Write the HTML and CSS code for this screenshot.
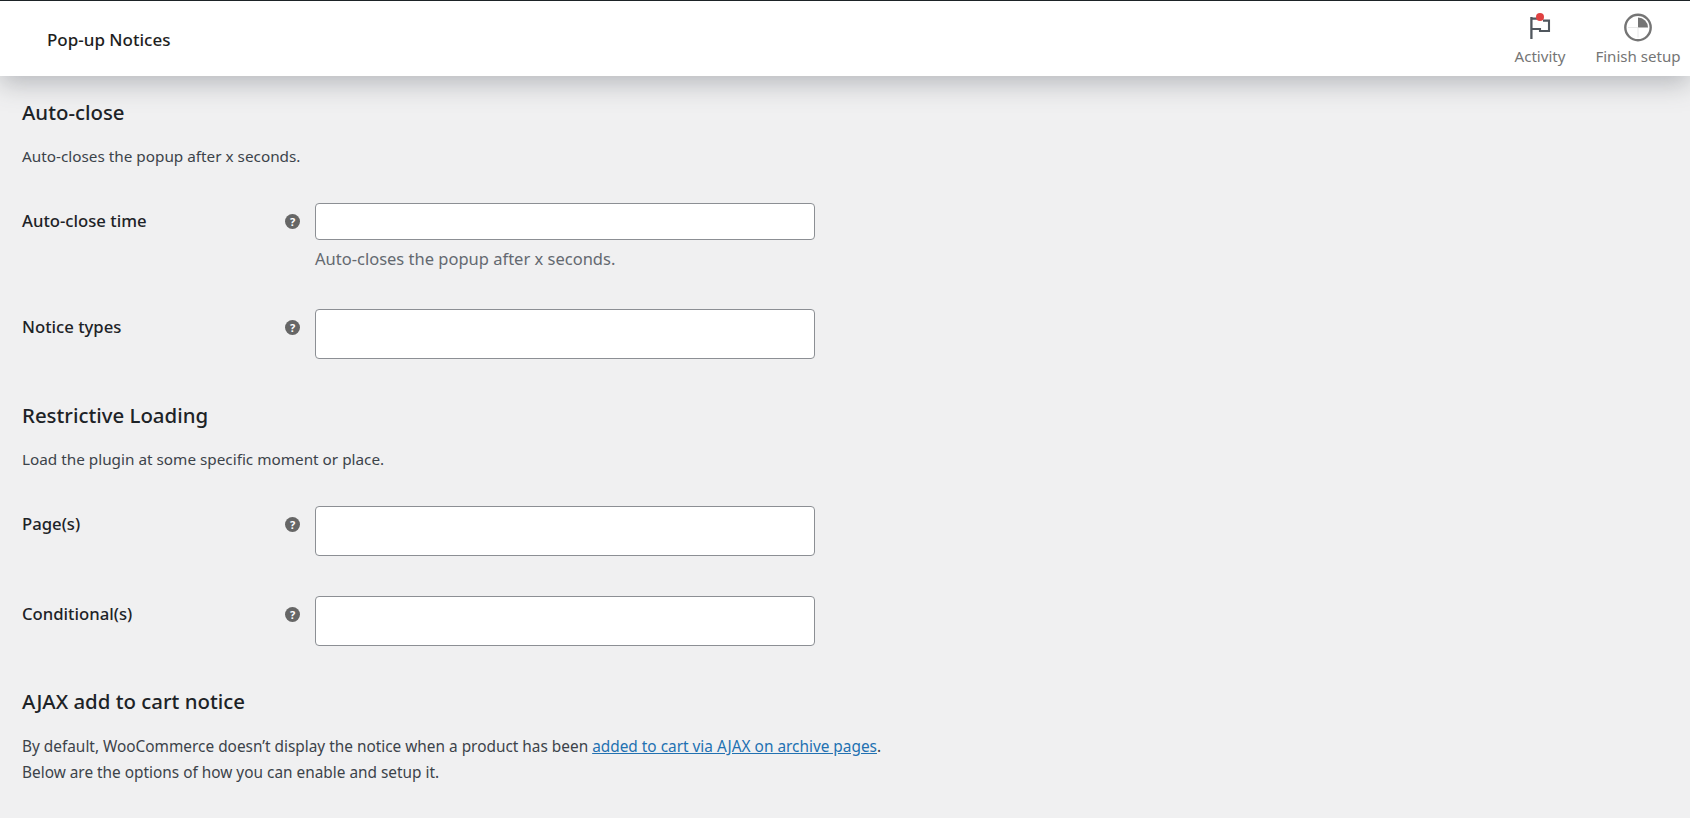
FILE: index.html
```html
<!DOCTYPE html>
<html lang="en">
<head>
<meta charset="utf-8">
<title>Pop-up Notices</title>
<link rel="stylesheet" href="styles.css">
</head>
<body>
<header class="topbar">
  <h1 class="page-title">Pop-up Notices</h1>
  <nav class="activity">
    <a class="activity-item">
      <span class="activity-icon">
        <svg width="24" height="24" viewBox="0 0 24 24" fill="none"><path d="M3.4 1v22" stroke="#50575e" stroke-width="2.3"/><path d="M3.4 2.6H10M3.4 13H12V15H21V4.6H15" stroke="#50575e" stroke-width="2.1"/></svg>
        <span class="badge"></span>
      </span>
      <span class="activity-label">Activity</span>
    </a>
    <a class="activity-item">
      <span class="activity-icon">
        <svg width="30" height="30" viewBox="0 0 30 30" fill="none"><circle cx="15" cy="14.5" r="12.7" stroke="#757575" stroke-width="2.4"/><path d="M15 14.5V4.5a10 10 0 0 1 10 10z" fill="#757575"/><path d="M15 14.5v10M5 14.5h10" stroke="#e8e8e8" stroke-width="1"/></svg>
      </span>
      <span class="activity-label">Finish setup</span>
    </a>
  </nav>
</header>
<main class="content">
  <h2 class="section-title">Auto-close</h2>
  <p class="section-desc">Auto-closes the popup after x seconds.</p>
  <div class="field field-time">
    <label class="field-label">Auto-close time</label>
    <span class="help">?</span>
    <div class="field-control">
      <input class="input input-short" type="text">
      <p class="hint">Auto-closes the popup after x seconds.</p>
    </div>
  </div>
  <div class="field field-types">
    <label class="field-label">Notice types</label>
    <span class="help">?</span>
    <div class="field-control"><div class="input input-tall"></div></div>
  </div>
  <h2 class="section-title title-loading">Restrictive Loading</h2>
  <p class="section-desc">Load the plugin at some specific moment or place.</p>
  <div class="field field-pages">
    <label class="field-label">Page(s)</label>
    <span class="help">?</span>
    <div class="field-control"><div class="input input-tall"></div></div>
  </div>
  <div class="field field-cond">
    <label class="field-label">Conditional(s)</label>
    <span class="help">?</span>
    <div class="field-control"><div class="input input-tall"></div></div>
  </div>
  <h2 class="section-title title-ajax">AJAX add to cart notice</h2>
  <p class="section-desc desc-ajax">By default, WooCommerce doesn’t display the notice when a product has been <a href="#">added to cart via AJAX on archive pages</a>.<br>Below are the options of how you can enable and setup it.</p>
</main>
</body>
</html>
```
FILE: styles.css
```css
* { box-sizing: border-box; }
html, body { margin: 0; height: 100%; overflow: hidden; }
body {
  background: #f0f0f1;
  color: #3c434a;
  font-family: "Noto Sans", "Open Sans", sans-serif;
  font-size: 15.3px;
}
.topbar {
  height: 76px;
  background: #fff;
  border-top: 1px solid #1d2327;
  box-shadow: 0 8px 24px rgba(80, 85, 95, 0.35);
  display: flex;
  align-items: center;
  justify-content: space-between;
  padding-left: 47px;
  position: relative;
}
.page-title { margin: 0; padding-top: 2px; font-size: 17px; font-weight: 500; color: #1e1e1e; }
.activity { display: flex; height: 100%; }
.activity-item {
  display: flex;
  flex-direction: column;
  align-items: center;
  width: 96px;
  color: #757575;
  font-size: 15.1px;
  line-height: 20px;
  padding-top: 12px;
}
.activity-item:last-child { width: 100px; margin-right: 2px; }
.activity-icon { position: relative; height: 30px; display: flex; align-items: center; margin-bottom: 3px; }
.badge {
  position: absolute; top: 0; left: 8px;
  width: 8px; height: 8px; border-radius: 50%;
  background: #e04141;
}
.content { padding: 0 22px; }
.section-title { margin: 0; font-size: 20.4px; font-weight: 500; color: #1d2327; line-height: 24px; padding-top: 24px; }
.section-desc { margin: 22px 0 0; line-height: 20px; }
.field { display: flex; }
.field-label { width: 263px; font-size: 16.7px; font-weight: 500; color: #1d2327; line-height: 20px; padding-top: 8px; }
.help {
  width: 15px; height: 15px; margin-top: 11px; margin-right: 15px; border-radius: 50%;
  background: #666; color: #fff; font-size: 11px; font-weight: 700; line-height: 15px; text-align: center;
  flex: none;
}
.input {
  display: block; width: 500px; background: #fff;
  border: 1px solid #8c8f94; border-radius: 4px; padding: 0;
}
.input-short { height: 37px; }
.input-tall { height: 50px; }
.hint { margin: 9px 0 0; font-size: 16.5px; line-height: 20px; color: #646970; }
.field-time { margin-top: 37px; }
.field-types { margin-top: 40px; }
.title-loading { padding-top: 44px; }
.field-pages { margin-top: 37px; }
.field-cond { margin-top: 40px; }
.title-ajax { padding-top: 43px; }
.desc-ajax { font-size: 15.38px; line-height: 26px; margin-top: 21px; }
a { color: #2271b1; }
```
